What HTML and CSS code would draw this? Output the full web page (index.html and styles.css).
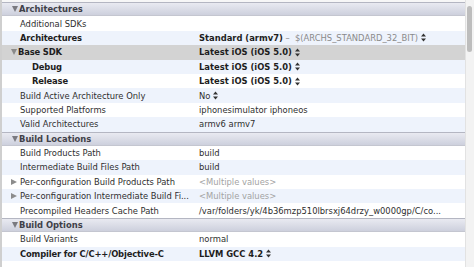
FILE: index.html
```html
<!DOCTYPE html>
<html lang="en">
  <head>
    <meta charset="UTF-8" />
    <title>Build Settings</title>
    <link rel="stylesheet" href="styles.css">
  </head>
  <body>
    <div class="editor">
      <div class="outline">
        <div class="section"><span class="tri down"></span>Architectures</div>
        <div class="row"><span class="key">Additional SDKs</span><span class="val"></span></div>
        <div class="row alt bold"><span class="key">Architectures</span><span class="val">Standard (armv7) <span class="dim">&nbsp;–&nbsp; $(ARCHS_STANDARD_32_BIT)</span><svg class="stepper" width="5" height="9" viewBox="0 0 5 9"><path d="M0 3.6 L2.5 0.4 L5 3.6 Z M0 5.4 L5 5.4 L2.5 8.6 Z" fill="#333"/></svg></span></div>
        <div class="row selected bold"><span class="key"><span class="tri down small"></span>Base SDK</span><span class="val">Latest iOS (iOS 5.0)<svg class="stepper" width="5" height="9" viewBox="0 0 5 9"><path d="M0 3.6 L2.5 0.4 L5 3.6 Z M0 5.4 L5 5.4 L2.5 8.6 Z" fill="#333"/></svg></span></div>
        <div class="row alt bold"><span class="key indent">Debug</span><span class="val">Latest iOS (iOS 5.0)<svg class="stepper" width="5" height="9" viewBox="0 0 5 9"><path d="M0 3.6 L2.5 0.4 L5 3.6 Z M0 5.4 L5 5.4 L2.5 8.6 Z" fill="#333"/></svg></span></div>
        <div class="row bold"><span class="key indent">Release</span><span class="val">Latest iOS (iOS 5.0)<svg class="stepper" width="5" height="9" viewBox="0 0 5 9"><path d="M0 3.6 L2.5 0.4 L5 3.6 Z M0 5.4 L5 5.4 L2.5 8.6 Z" fill="#333"/></svg></span></div>
        <div class="row alt"><span class="key">Build Active Architecture Only</span><span class="val">No<svg class="stepper" width="5" height="9" viewBox="0 0 5 9"><path d="M0 3.6 L2.5 0.4 L5 3.6 Z M0 5.4 L5 5.4 L2.5 8.6 Z" fill="#333"/></svg></span></div>
        <div class="row"><span class="key">Supported Platforms</span><span class="val">iphonesimulator iphoneos</span></div>
        <div class="row alt"><span class="key">Valid Architectures</span><span class="val">armv6 armv7</span></div>

        <div class="section"><span class="tri down"></span>Build Locations</div>
        <div class="row"><span class="key">Build Products Path</span><span class="val">build</span></div>
        <div class="row alt"><span class="key">Intermediate Build Files Path</span><span class="val">build</span></div>
        <div class="row"><span class="key"><span class="tri right"></span>Per-configuration Build Products Path</span><span class="val multi">&lt;Multiple values&gt;</span></div>
        <div class="row alt"><span class="key"><span class="tri right"></span>Per-configuration Intermediate Build Fi...</span><span class="val multi">&lt;Multiple values&gt;</span></div>
        <div class="row"><span class="key">Precompiled Headers Cache Path</span><span class="val">/var/folders/yk/4b36mzp510lbrsxj64drzy_w0000gp/C/co...</span></div>

        <div class="section"><span class="tri down"></span>Build Options</div>
        <div class="row"><span class="key">Build Variants</span><span class="val">normal</span></div>
        <div class="row alt bold"><span class="key">Compiler for C/C++/Objective-C</span><span class="val">LLVM GCC 4.2<svg class="stepper" width="5" height="9" viewBox="0 0 5 9"><path d="M0 3.6 L2.5 0.4 L5 3.6 Z M0 5.4 L5 5.4 L2.5 8.6 Z" fill="#333"/></svg></span></div>
        <div class="row"><span class="key"></span><span class="val"></span></div>
      </div>
      <div class="scroller"><div class="thumb"></div></div>
    </div>
  </body>
</html>
```

FILE: styles.css
```css
html, body {
    margin: 0;
    padding: 0;
    height: 267px;
    overflow: hidden;
    background-color: #ffffff;
}

body {
    font-family: 'DejaVu Sans', sans-serif;
    font-size: 8.4px;
    color: #2e2e2e;
}

.editor {
    display: flex;
    height: 267px;
}

.outline {
    flex: 1;
    border-left: 2px solid #cfcfcf;
    padding-top: 2px;
    background-color: #f7f7f7;
}

.row, .section {
    display: flex;
    align-items: center;
    height: 14.4px;
    box-sizing: border-box;
    white-space: nowrap;
    background-color: #ffffff;
}

.row.alt {
    background-color: #eef3fc;
}

.row.selected {
    background-color: #d3d3d3;
}

.row.bold {
    font-weight: bold;
    color: #1e1e1e;
}

.row.bold .key {
    letter-spacing: -0.15px;
}

.section {
    font-weight: bold;
    color: #404048;
    padding-left: 10px;
    background: linear-gradient(#e9eaf1, #cdd0dd);
    border-top: 1px solid #b4b6c2;
    border-bottom: 1px solid #c4c6d0;
}

.key {
    display: flex;
    align-items: center;
    box-sizing: border-box;
    width: 197px;
    flex: none;
    padding-left: 18px;
    overflow: hidden;
}

.key.indent {
    padding-left: 30px;
}

.key .tri {
    margin-left: -9px;
    margin-right: 3px;
}

.val {
    display: flex;
    align-items: center;
}

.dim {
    color: #8a8a8a;
    font-weight: normal;
}

.multi {
    color: #a3a3a3;
}

.stepper {
    margin-left: 3px;
}

.tri {
    display: inline-block;
    width: 0;
    height: 0;
    flex: none;
}

.tri.down {
    border-left: 3.5px solid transparent;
    border-right: 3.5px solid transparent;
    border-top: 6px solid #7a7a80;
    margin-right: 1px;
}

.tri.down.small {
    border-top-color: #8a8a8a;
}

.tri.right {
    border-top: 3.5px solid transparent;
    border-bottom: 3.5px solid transparent;
    border-left: 6px solid #8c8c8c;
}

.scroller {
    width: 8px;
    background-color: #f3f3f3;
    border-left: 1px solid #e2e2e2;
    padding-top: 6px;
}

.thumb {
    width: 5px;
    height: 46px;
    margin-left: 1px;
    border-radius: 3px;
    background-color: #bdbdbd;
}
```
